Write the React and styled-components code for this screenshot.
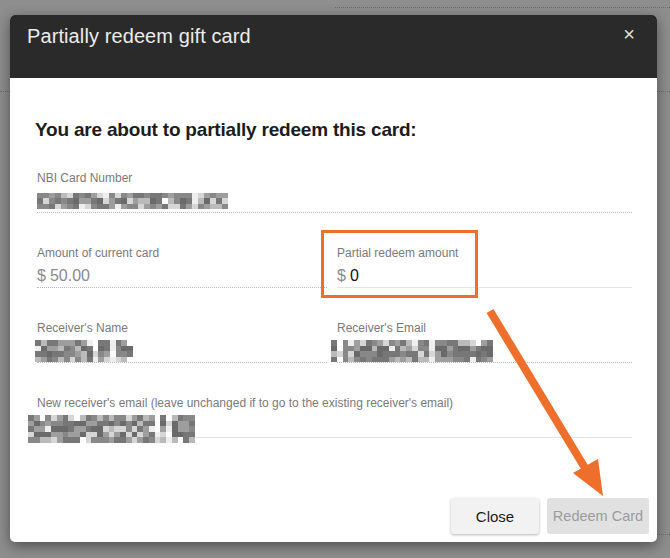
import React from "react";
import styled, { createGlobalStyle } from "styled-components";

const Global = createGlobalStyle`
  html, body { margin: 0; padding: 0; }
  body {
    width: 670px; height: 558px; overflow: hidden;
    background: #8e8e8e;
    font-family: "Liberation Sans", Arial, sans-serif;
  }
`;

const Page = styled.div`
  position: relative;
  display: flow-root;
  width: 670px;
  height: 558px;
`;

const BgLine = styled.div`
  margin-left: ${(p) => p.$left || 0}px;
  margin-top: ${(p) => p.$top}px;
  border-top: 1px dotted #6c6c6c;
  height: 0;
`;

const Modal = styled.div`
  position: absolute;
  left: 10px;
  top: 15px;
  width: 647px;
  height: 527px;
  background: #fff;
  border-radius: 5px;
  box-shadow: 0 4px 14px rgba(0, 0, 0, 0.45);
  display: flex;
  flex-direction: column;
  overflow: hidden;
`;

const Header = styled.div`
  height: 63px;
  background: #2a2a2a;
  display: flex;
  justify-content: space-between;
  align-items: flex-start;
  padding: 9px 22px 0 17px;
  box-sizing: border-box;
`;

const Title = styled.h2`
  margin: 0;
  font-weight: 400;
  font-size: 20px;
  line-height: 24px;
  color: #ececec;
  letter-spacing: 0.1px;
`;

const CloseX = styled.span`
  color: #e0e0e0;
  font-size: 20px;
  line-height: 20px;
  margin-top: 0px;
`;

const Body = styled.div`
  flex: 1;
  padding: 41px 25px 0 25px;
  display: flex;
  flex-direction: column;
`;

const Heading = styled.h3`
  margin: 0 0 29px 0;
  font-size: 19px;
  font-weight: 700;
  line-height: 22px;
  color: #1c1c1c;
  letter-spacing: -0.2px;
`;

const Grid = styled.div`
  display: grid;
  grid-template-columns: 290px 295px;
  column-gap: 10px;
  row-gap: 32px;
  padding-left: 2px;
`;

const Field = styled.div`
  grid-column: ${(p) => (p.$full ? "1 / span 2" : "auto")};
  display: flex;
  flex-direction: column;
  border-bottom: 1px ${(p) => (p.$solid ? "solid #e4e4e4" : "dotted #b8b8b8")};
`;

const Label = styled.div`
  font-size: 12px;
  line-height: 16px;
  color: #7a7a7a;
  margin-bottom: 4px;
  white-space: nowrap;
`;

const Value = styled.div`
  height: 22px;
  display: flex;
  align-items: center;
  font-size: 16px;
  color: #8a8a8a;
  margin-left: ${(p) => p.$shift || 0}px;
`;

const Dollar = styled.span`
  color: #8a8a8a;
  margin-right: 4px;
`;

const Amount = styled.span`
  color: ${(p) => (p.$dark ? "#111" : "#8a8a8a")};
`;

const Footer = styled.div`
  display: flex;
  justify-content: flex-end;
  gap: 8px;
  padding: 0 8px 8px 0;
`;

const Button = styled.button`
  height: 36px;
  padding: 0;
  width: ${(p) => (p.$primary ? 102 : 88)}px;
  white-space: nowrap;
  border: none;
  border-radius: 3px;
  font-family: "Liberation Sans", Arial, sans-serif;
  font-size: ${(p) => (p.$primary ? 14.5 : 15)}px;
  background: ${(p) => (p.$primary ? "#e1e1e1" : "#f2f2f2")};
  color: ${(p) => (p.$primary ? "#9b9b9b" : "#1a1a1a")};
  box-shadow: ${(p) => (p.$primary ? "none" : "0 1px 3px rgba(0,0,0,0.3)")};
`;

const Highlight = styled.div`
  position: absolute;
  left: 321px;
  top: 230px;
  width: 157px;
  height: 68px;
  border: 3px solid #ee6f2b;
  box-sizing: border-box;
  pointer-events: none;
`;

const ArrowSvg = styled.svg`
  position: absolute;
  left: 0;
  top: 0;
  pointer-events: none;
`;

function mulberry32(a) {
  return function () {
    a |= 0;
    a = (a + 0x6d2b79f5) | 0;
    let t = Math.imul(a ^ (a >>> 15), 1 | a);
    t = (t + Math.imul(t ^ (t >>> 7), 61 | t)) ^ t;
    return ((t ^ (t >>> 14)) >>> 0) / 4294967296;
  };
}

const SHADES = ["#ffffff", "#eeeeee", "#d6d6d6", "#bababa", "#9e9e9e", "#888888", "#777777", "#6a6a6a"];

function Mosaic({ cols, rows, w, h, seed, style }) {
  const r = mulberry32(seed);
  const cw = w / cols;
  const ch = h / rows;
  const rects = [];
  for (let x = 0; x < cols; x++) {
    const gap = r() < 0.1;
    for (let y = 0; y < rows; y++) {
      const edge = y === 0 || y === rows - 1 ? 0.85 : 1;
      const v = r();
      const dark = gap ? v * 0.3 : Math.pow(v, 0.45) * edge;
      const idx = Math.min(SHADES.length - 1, Math.floor(dark * SHADES.length));
      rects.push(
        <rect key={x + "-" + y} x={x * cw} y={y * ch} width={cw + 0.3} height={ch + 0.3} fill={SHADES[idx]} />
      );
    }
  }
  return (
    <svg width={w} height={h} style={style} shapeRendering="crispEdges">
      {rects}
    </svg>
  );
}

export default function App() {
  return (
    <Page>
      <Global />
      <BgLine $top={7} $left={335} />
      <BgLine $top={83} />
      <BgLine $top={442} $left={657} />
      <Modal>
        <Header>
          <Title>Partially redeem gift card</Title>
          <CloseX>×</CloseX>
        </Header>
        <Body>
          <Heading>You are about to partially redeem this card:</Heading>
          <Grid>
            <Field $full>
              <Label>NBI Card Number</Label>
              <Value>
                <Mosaic cols={32} rows={3} w={191} h={16} seed={11} />
              </Value>
            </Field>
            <Field>
              <Label>Amount of current card</Label>
              <Value>
                <Dollar>$</Dollar>
                <Amount>50.00</Amount>
              </Value>
            </Field>
            <Field $solid>
              <Label>Partial redeem amount</Label>
              <Value>
                <Dollar>$</Dollar>
                <Amount $dark>0</Amount>
              </Value>
            </Field>
            <Field>
              <Label>Receiver's Name</Label>
              <Value $shift={-2}>
                <Mosaic cols={17} rows={4} w={98} h={22} seed={37} />
              </Value>
            </Field>
            <Field>
              <Label>Receiver's Email</Label>
              <Value $shift={-6}>
                <Mosaic cols={28} rows={4} w={162} h={22} seed={73} />
              </Value>
            </Field>
            <Field $full $solid>
              <Label>New receiver's email (leave unchanged if to go to the existing receiver's email)</Label>
              <Value $shift={-9}>
                <Mosaic cols={29} rows={5} w={167} h={28} seed={5} style={{ marginTop: 6 }} />
              </Value>
            </Field>
          </Grid>
        </Body>
        <Footer>
          <Button>Close</Button>
          <Button $primary>Redeem Card</Button>
        </Footer>
      </Modal>
      <Highlight />
      <ArrowSvg width="670" height="558" viewBox="0 0 670 558">
        <line x1="490" y1="311" x2="585" y2="468" stroke="#ee6f2b" strokeWidth="8" />
        <polygon points="573,473 598,459 603,496" fill="#ee6f2b" />
      </ArrowSvg>
    </Page>
  );
}
